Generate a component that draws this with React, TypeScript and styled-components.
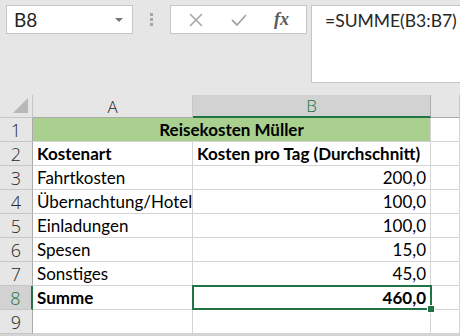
import React from 'react';
import styled, { createGlobalStyle, css } from 'styled-components';

const GlobalStyle = createGlobalStyle`
  html, body {
    margin: 0;
    padding: 0;
    background: #e6e6e6;
  }
  body {
    font-family: Lato, "Noto Sans", sans-serif;
    color: #000;
  }
`;

const Window = styled.div`
  width: 460px;
  height: 336px;
  overflow: hidden;
  background: #e6e6e6;
  display: flex;
  flex-direction: column;
`;

const FormulaRow = styled.div`
  display: flex;
  align-items: flex-start;
  padding: 5px 0 0 6px;
  height: 95px;
  flex-shrink: 0;
  box-sizing: border-box;
`;

const NameBox = styled.div`
  flex: 0 0 127px;
  height: 29px;
  box-sizing: border-box;
  background: #fff;
  border: 1px solid #c6c6c6;
  display: flex;
  align-items: center;
  justify-content: space-between;
  padding: 0 9px 0 7px;
  font-size: 19px;
  color: #262626;
`;

const Caret = styled.span`
  width: 0;
  height: 0;
  border-left: 4px solid transparent;
  border-right: 4px solid transparent;
  border-top: 4px solid #777;
`;

const Grip = styled.div`
  flex: 0 0 37px;
  height: 29px;
  display: flex;
  flex-direction: column;
  align-items: center;
  justify-content: center;
  gap: 2px;

  span {
    width: 3px;
    height: 3px;
    background: #a6a6a6;
  }
`;

const ButtonBox = styled.div`
  flex: 0 0 137px;
  height: 29px;
  box-sizing: border-box;
  background: #fff;
  border: 1px solid #c6c6c6;
  display: flex;
  align-items: center;
  justify-content: space-around;
  padding: 0 4px;
`;

const FxLabel = styled.span`
  font-family: "Liberation Serif", serif;
  font-style: italic;
  font-weight: bold;
  font-size: 18px;
  color: #595959;
`;

const FormulaInput = styled.div`
  flex: 1 1 auto;
  min-width: 0;
  margin-left: 4px;
  height: 78px;
  background: #fff;
  border-left: 1px solid #c6c6c6;
  border-top: 1px solid #c6c6c6;
  border-bottom: 1px solid #c6c6c6;
  box-sizing: border-box;
  padding: 4px 0 0 13px;
  font-size: 17.5px;
  color: #262626;
  white-space: nowrap;
`;

const Sheet = styled.div`
  position: relative;
  display: grid;
  grid-template-columns: 33px 160px 238px 1fr;
  grid-template-rows: 23px repeat(9, 24px);
  background: #fff;
  flex-shrink: 0;
`;

const Corner = styled.div`
  background: #e6e6e6;
  border-right: 1px solid #c6c6c6;
  border-bottom: 1px solid #c6c6c6;
  position: relative;

  &::after {
    content: '';
    position: absolute;
    right: 4px;
    bottom: 4px;
    width: 0;
    height: 0;
    border-left: 15px solid transparent;
    border-bottom: 15px solid #b8b8b8;
  }
`;

const ColHead = styled.div<{ $active?: boolean }>`
  background: #e6e6e6;
  border-right: 1px solid #c6c6c6;
  border-bottom: 1px solid #ababab;
  display: flex;
  align-items: center;
  justify-content: center;
  font-size: 17px;
  color: #262626;
  font-family: "Open Sans", sans-serif;
  font-weight: 300;

  ${(p) =>
    p.$active &&
    css`
      background: #d2d2d2;
      color: #217346;
      border-bottom: 2px solid #217346;
      border-right-color: #ababab;
    `}
`;

const RowHead = styled.div<{ $active?: boolean }>`
  background: #e6e6e6;
  border-right: 1px solid #ababab;
  border-bottom: 1px solid #c6c6c6;
  display: flex;
  align-items: center;
  justify-content: center;
  font-size: 18px;
  color: #262626;
  font-family: "Open Sans", sans-serif;
  font-weight: 300;

  ${(p) =>
    p.$active &&
    css`
      background: #d2d2d2;
      color: #217346;
      border-right: 2px solid #217346;
    `}
`;

const Cell = styled.div<{ $bold?: boolean; $right?: boolean }>`
  border-right: 1px solid #d4d4d4;
  border-bottom: 1px solid #d4d4d4;
  display: flex;
  align-items: flex-end;
  justify-content: ${(p) => (p.$right ? 'flex-end' : 'flex-start')};
  padding: 0 4px 1px;
  font-size: 17px;
  font-weight: ${(p) => (p.$bold ? 700 : 400)};
  white-space: nowrap;
  background: #fff;
`;

const Title = styled.div`
  grid-column: 2 / span 2;
  background: #a9d08e;
  border-right: 1px solid #d4d4d4;
  border-bottom: 1px solid #d4d4d4;
  display: flex;
  align-items: flex-end;
  justify-content: center;
  padding-bottom: 1px;
  font-size: 17px;
  font-weight: 700;
`;

const Selection = styled.div`
  position: absolute;
  left: 192px;
  top: 190px;
  width: 240px;
  height: 25px;
  box-sizing: border-box;
  border: 2px solid #217346;
  pointer-events: none;

  &::after {
    content: '';
    position: absolute;
    right: -5px;
    bottom: -5px;
    width: 6px;
    height: 6px;
    background: #217346;
    border: 1px solid #fff;
  }
`;

const BottomEdge = styled.div`
  flex: 1;
  background: #d4d4d4;
`;

const rows: { label: string; value: string; bold?: boolean }[] = [
  { label: 'Fahrtkosten', value: '200,0' },
  { label: 'Übernachtung/Hotel', value: '100,0' },
  { label: 'Einladungen', value: '100,0' },
  { label: 'Spesen', value: '15,0' },
  { label: 'Sonstiges', value: '45,0' },
  { label: 'Summe', value: '460,0', bold: true },
];

const CrossIcon = () => (
  <svg width="16" height="16" viewBox="0 0 16 16">
    <path d="M2 2 L14 14 M14 2 L2 14" stroke="#a6a6a6" strokeWidth="1.6" fill="none" />
  </svg>
);

const CheckIcon = () => (
  <svg width="18" height="16" viewBox="0 0 18 16">
    <path d="M2 8 L7 13 L16 3" stroke="#a6a6a6" strokeWidth="1.8" fill="none" />
  </svg>
);

const App = () => {
  return (
    <>
      <GlobalStyle />
      <Window>
        <FormulaRow>
          <NameBox>
            B8
            <Caret />
          </NameBox>
          <Grip>
            <span />
            <span />
            <span />
          </Grip>
          <ButtonBox>
            <CrossIcon />
            <CheckIcon />
            <FxLabel>fx</FxLabel>
          </ButtonBox>
          <FormulaInput>=SUMME(B3:B7)</FormulaInput>
        </FormulaRow>
        <Sheet>
          <Corner />
          <ColHead>A</ColHead>
          <ColHead $active>B</ColHead>
          <ColHead />

          <RowHead>1</RowHead>
          <Title>Reisekosten Müller</Title>
          <Cell />

          <RowHead>2</RowHead>
          <Cell $bold>Kostenart</Cell>
          <Cell $bold>Kosten pro Tag (Durchschnitt)</Cell>
          <Cell />

          {rows.map((row, i) => (
            <React.Fragment key={row.label}>
              <RowHead $active={row.bold}>{i + 3}</RowHead>
              <Cell $bold={row.bold}>{row.label}</Cell>
              <Cell $bold={row.bold} $right>
                {row.value}
              </Cell>
              <Cell />
            </React.Fragment>
          ))}

          <RowHead>9</RowHead>
          <Cell />
          <Cell />
          <Cell />
          <Selection />
        </Sheet>
        <BottomEdge />
      </Window>
    </>
  );
};

export default App;
